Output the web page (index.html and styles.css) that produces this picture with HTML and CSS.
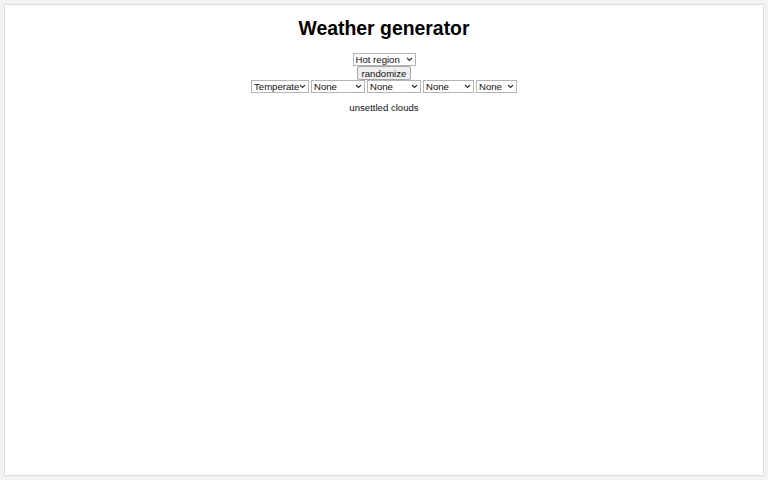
FILE: index.html
```html
<!DOCTYPE html>
<html>
<head>
<meta charset="utf-8">
<link rel="stylesheet" href="styles.css">
</head>
<body>
<div class="panel">
  <h1 class="title">Weather generator</h1>
  <div class="controls">
    <div class="row"><select class="ctl w-hot"><option>Hot region</option></select></div>
    <div class="row"><button class="btn">randomize</button></div>
    <div class="row">
      <select class="ctl w-temp"><option>Temperate</option></select>
      <select class="ctl w-none"><option>None</option></select>
      <select class="ctl w-none"><option>None</option></select>
      <select class="ctl w-none2"><option>None</option></select>
      <select class="ctl w-small"><option>None</option></select>
    </div>
  </div>
  <p class="result">unsettled clouds</p>
</div>
</body>
</html>
```
FILE: styles.css
```css
html, body { margin: 0; padding: 0; }
body {
  background: #f3f3f3;
  font-family: "Liberation Sans", Arial, sans-serif;
  padding: 4px;
  height: 480px;
  box-sizing: border-box;
}
.panel {
  background: #fff;
  border: 1px solid #dcdcdc;
  height: 472px;
  box-sizing: border-box;
  text-align: center;
}
.title {
  margin: 12px 0 0;
  font-size: 19.4px;
  line-height: 22px;
  font-weight: bold;
  color: #000;
}
.controls { margin-top: 14px; display: flex; flex-direction: column; gap: 0; }
.row { display: flex; justify-content: center; gap: 2px; }
.ctl {
  -webkit-appearance: none;
  appearance: none;
  font-family: "Liberation Sans", Arial, sans-serif;
  font-size: 9.6px;
  line-height: 11px;
  height: 13px;
  box-sizing: border-box;
  margin: 0;
  padding: 0 0 0 2px;
  border: 1px solid #b4b4b4;
  border-radius: 0;
  background-color: #fff;
  background-image: url("data:image/svg+xml,%3Csvg xmlns='http://www.w3.org/2000/svg' width='7' height='5' viewBox='0 0 7 5'%3E%3Cpath d='M1 1l2.5 2.5L6 1' fill='none' stroke='%23333' stroke-width='1.2'/%3E%3C/svg%3E");
  background-repeat: no-repeat;
  background-position: right 2px center;
  color: #111;
  text-align: left;
}
.btn {
  font-family: "Liberation Sans", Arial, sans-serif;
  font-size: 9.6px;
  line-height: 11px;
  height: 14px;
  margin: 0;
  padding: 0 4px;
  border: 1px solid #a8a8a8;
  border-radius: 2px;
  background: #efefef;
  color: #111;
}
.w-hot { width: 63px; }
.w-temp { width: 58px; }
.w-none { width: 54px; }
.w-none2 { width: 51px; }
.w-small { width: 41px; }
.result {
  margin: 9px 0 0;
  font-size: 9.6px;
  line-height: 12px;
  color: #111;
}
```
